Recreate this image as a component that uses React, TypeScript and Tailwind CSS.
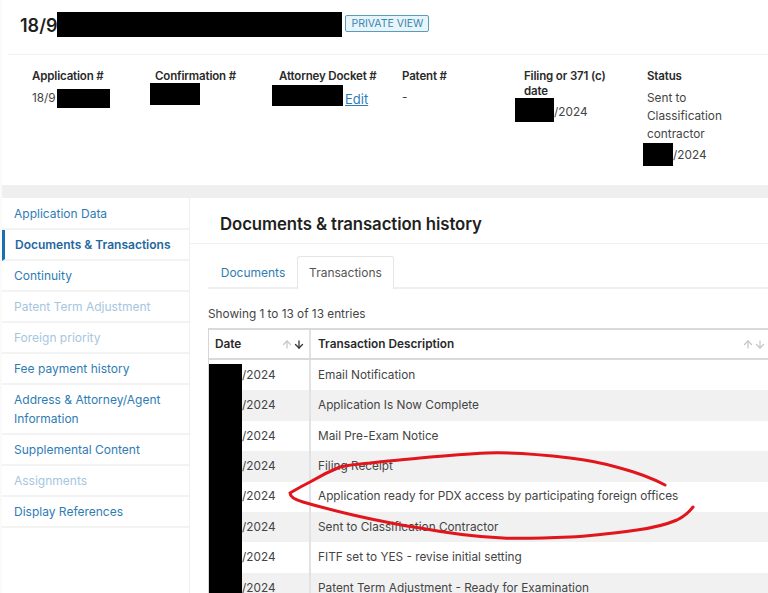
import { ArrowDown, ArrowUp } from "lucide-react";

const nav = [
  { label: "Application Data", h: "h-[31px]" },
  { label: "Documents & Transactions", h: "h-[31px]", active: true },
  { label: "Continuity", h: "h-[31px]" },
  { label: "Patent Term Adjustment", h: "h-[31px]", disabled: true },
  { label: "Foreign priority", h: "h-[31px]", disabled: true },
  { label: "Fee payment history", h: "h-[31px]" },
  { label: "Address & Attorney/Agent Information", h: "h-[50px]" },
  { label: "Supplemental Content", h: "h-[31px]" },
  { label: "Assignments", h: "h-[31px]", disabled: true },
  { label: "Display References", h: "h-[31px]" },
];

const rows = [
  "Email Notification",
  "Application Is Now Complete",
  "Mail Pre-Exam Notice",
  "Filing Receipt",
  "Application ready for PDX access by participating foreign offices",
  "Sent to Classification Contractor",
  "FITF set to YES - revise initial setting",
  "Patent Term Adjustment - Ready for Examination",
];

function Redact({ className }: { className: string }) {
  return <span className={`inline-block bg-black ${className}`} />;
}

function Label({ children }: { children: React.ReactNode }) {
  return <div className="text-[11.5px] font-semibold leading-[15px] tracking-[-0.15px] text-[#2a2a2a]">{children}</div>;
}

export default function App() {
  return (
    <div className="relative h-[593px] w-[768px] overflow-hidden bg-[#fafafa] pl-[2px] font-['Inter','Liberation_Sans',sans-serif] text-[11.8px] text-[#444]">
      <div className="h-[185px] bg-white">
        <div className="ml-[6px] flex h-[55px] items-start border-b border-[#f0f0f0] pl-[12px] pt-[12px]">
          <div className="flex h-[26px] items-center text-[18px] font-semibold text-[#1f1f1f]">18/9</div>
          <Redact className="h-[25px] w-[285px]" />
          <span className="ml-[3px] mt-[3px] flex h-[17px] w-[84px] items-center justify-center rounded-[2px] border border-[#5a9bc0] bg-[#e7f5fa] text-[10.5px] text-[#3a86b4]">
            PRIVATE VIEW
          </span>
        </div>
        <div className="flex pl-[30px] pt-[14px]">
          <div className="w-[123px]">
            <Label>Application #</Label>
            <div className="mt-[5px] flex items-center">
              <span className="w-[25px]">18/9</span>
              <Redact className="h-[19px] w-[53px]" />
            </div>
          </div>
          <div className="w-[124px]">
            <Label>Confirmation #</Label>
            <Redact className="-ml-[5px] -mt-[1px] block h-[22px] w-[50px]" />
          </div>
          <div className="w-[123px]">
            <Label>Attorney Docket #</Label>
            <div className="-ml-[7px] mt-[1px] flex items-end">
              <Redact className="h-[21px] w-[71px]" />
              <a className="ml-[2px] text-[13px] leading-[14px] text-[#2b7fb8] underline">Edit</a>
            </div>
          </div>
          <div className="w-[122px]">
            <Label>Patent #</Label>
            <div className="mt-[5px]">-</div>
          </div>
          <div className="w-[123px]">
            <div className="w-[92px]">
              <Label>Filing or 371 (c) date</Label>
            </div>
            <div className="-ml-[9px] -mt-[1px] flex items-end">
              <Redact className="h-[24px] w-[39px]" />
              <span className="leading-[19px]">/2024</span>
            </div>
          </div>
          <div className="w-[90px]">
            <Label>Status</Label>
            <div className="mt-[5px] leading-[18px]">
              Sent to Classification contractor
              <div className="-ml-[4px] flex items-center">
                <Redact className="h-[23px] w-[30px]" />
                <span className="leading-[18px]">/2024</span>
              </div>
            </div>
          </div>
        </div>
      </div>

      <div className="h-[13px] bg-[#efefef]" />

      <div className="flex h-[395px] bg-white">
        <div className="w-[188px] shrink-0 border-r border-[#f0f0f0] pt-[1px] text-[12px]">
          {nav.map((item) => (
            <div
              key={item.label}
              className={`flex ${item.h} items-center border-b-2 border-[#f3f3f3] pr-2 leading-[19px] ${
                item.active
                  ? "border-l-[3px] border-l-[#1a6fae] pl-[10px] font-semibold text-[#23679f]"
                  : item.disabled
                    ? "pl-[12px] text-[#a6c6df]"
                    : "pl-[12px] text-[#2f7cb4]"
              }`}
            >
              {item.label}
            </div>
          ))}
        </div>

        <div className="min-w-0 flex-1 pl-[18px]">
          <div className="-ml-[18px] flex h-[46px] items-center border-b border-[#f0f0f0] pl-[30px] pt-[9px]">
            <span className="text-[16.8px] font-semibold tracking-[-0.1px] text-[#1f1f1f]">
              Documents &amp; transaction history
            </span>
          </div>
          <div className="flex h-[45px] items-end border-b-2 border-[#eeeeee] pl-[1px] text-[12px]">
            <div className="flex h-[29px] w-[88px] items-center justify-center text-[#2f7cb4]">Documents</div>
            <div className="-mb-[2px] flex h-[33px] w-[97px] items-center justify-center rounded-t-[3px] border border-b-0 border-[#e6e6e6] bg-white text-[#555]">
              Transactions
            </div>
          </div>
          <div className="flex h-[39px] items-center pt-[13px]">Showing 1 to 13 of 13 entries</div>

          <div className="border-l border-[#d6d6d6]">
            <div className="flex h-[32px] items-center border-y-2 border-[#d9d9d9] font-semibold text-[#2a2a2a]">
              <div className="flex h-full w-[102px] items-center justify-between border-r-2 border-[#e2e2e2] pl-[6px] pr-[4px] pt-[1px]">
                Date
                <span className="flex">
                  <ArrowUp className="h-[13px] w-[12px] text-[#c4c4c4]" strokeWidth={2.4} />
                  <ArrowDown className="h-[13px] w-[12px] text-[#333]" strokeWidth={2.6} />
                </span>
              </div>
              <div className="flex flex-1 items-center justify-between pl-[7px] pr-[2px] pt-[1px]">
                Transaction Description
                <span className="flex">
                  <ArrowUp className="h-[13px] w-[12px] text-[#c4c4c4]" strokeWidth={2.4} />
                  <ArrowDown className="h-[13px] w-[12px] text-[#c4c4c4]" strokeWidth={2.4} />
                </span>
              </div>
            </div>
            {rows.map((text, i) => (
              <div key={text} className={`flex h-[30.4px] items-center ${i % 2 ? "bg-[#f1f1f1]" : "bg-white"}`}>
                <div className="flex h-full w-[102px] items-center border-r-2 border-[#e2e2e2] pl-[33px] pt-[1px]">/2024</div>
                <div className="whitespace-nowrap pl-[7px] pt-[1px]">{text}</div>
              </div>
            ))}
          </div>
        </div>
      </div>

      {/* redaction over the date column */}
      <div className="absolute left-[209px] top-[364px] h-[229px] w-[33px] bg-black" />

      {/* red pen circle */}
      <svg className="absolute left-0 top-0" width="768" height="593" fill="none">
        <path
          d="M665 485 C650 477 635 472 620 468 C603 463 588 460 570 458 C545 455 515 452 487 453 C465 454 442 456 420 458 C402 460 385 461 370 463 C358 464 348 465 340 467 C330 471 320 476 310 482 C302 486 295 490 290 493 C290 497 296 500 303 502 C320 507 336 511 353 515 C375 520 398 525 420 528 C447 533 475 537 503 538 C525 539 548 538 570 537 C593 536 615 533 637 530 C652 528 665 525 677 520 C685 516 690 511 693 507"
          stroke="#e0161c"
          strokeWidth="3"
          strokeLinecap="round"
        />
      </svg>
    </div>
  );
}
